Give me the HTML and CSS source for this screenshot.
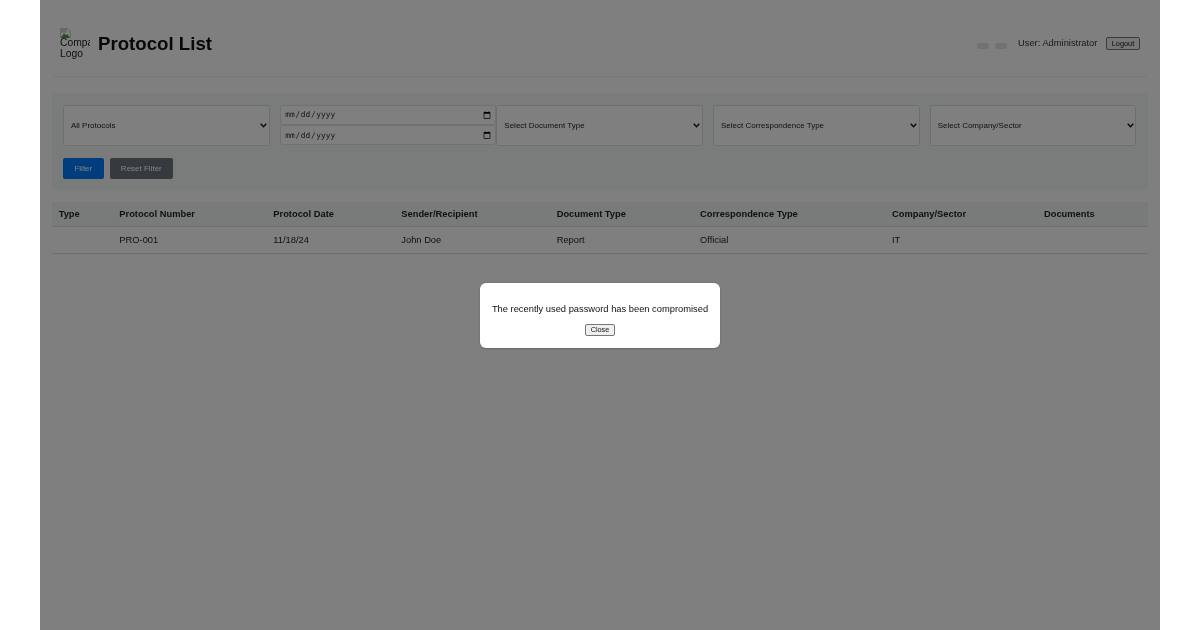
FILE: index.html
```html
<!DOCTYPE html>
<html lang="en">
<head>
<meta charset="utf-8">
<title>Protocol List</title>
<link rel="stylesheet" href="styles.css">
</head>
<body>
<div class="page">
  <header class="top soft">
    <div class="brand">
      <div class="logo">
        <svg class="broken" width="16" height="16" viewBox="0 0 16 16"><path d="M.5.5h10l5 5v10H.5z" fill="#fff" stroke="#a0a0a0"/><path d="M1 1h9v6H1z" fill="#c3d4f2"/><path d="M1 15l5-7 3 3 2-2 4 6z" fill="#4f9a3c"/></svg>
        <span class="alt">Company Logo</span>
      </div>
      <h1>Protocol List</h1>
    </div>
    <div class="user">
      <span class="pills"><i class="pill"></i><i class="pill"></i></span>
      <span class="name">User: Administrator</span>
      <button class="logout">Logout</button>
    </div>
  </header>
  <section class="filters soft">
    <div class="fields">
      <select class="sel"><option>All Protocols</option></select>
      <div class="dates">
        <input class="date" type="date">
        <input class="date" type="date">
      </div>
      <select class="sel"><option>Select Document Type</option></select>
      <select class="sel"><option>Select Correspondence Type</option></select>
      <select class="sel"><option>Select Company/Sector</option></select>
    </div>
    <div class="actions">
      <button class="btn primary">Filter</button>
      <button class="btn secondary">Reset Filter</button>
    </div>
  </section>
  <table class="list soft">
    <colgroup>
      <col class="c1"><col class="c2"><col class="c3"><col class="c4"><col class="c5"><col class="c6"><col class="c7"><col class="c8">
    </colgroup>
    <thead>
      <tr><th>Type</th><th>Protocol Number</th><th>Protocol Date</th><th>Sender/Recipient</th><th>Document Type</th><th>Correspondence Type</th><th>Company/Sector</th><th>Documents</th></tr>
    </thead>
    <tbody>
      <tr><td></td><td>PRO-001</td><td>11/18/24</td><td>John Doe</td><td>Report</td><td>Official</td><td>IT</td><td></td></tr>
    </tbody>
  </table>
  <div class="overlay">
    <div class="modal soft">
      <p class="msg">The recently used password has been compromised</p>
      <button class="close">Close</button>
    </div>
  </div>
</div>
</body>
</html>
```
FILE: styles.css
```css
* { box-sizing: border-box; }
html, body { margin: 0; height: 100%; background: #fff; }
body { font-family: "Liberation Sans", Arial, sans-serif; color: #212529; overflow: hidden; }
.page { zoom: 0.66667; position: relative; width: 1680px; height: 945px; margin: 0 auto; padding: 18px; background: #fff; overflow: hidden; }
.soft { filter: blur(.35px); }
.top { display: flex; justify-content: space-between; align-items: center; height: 96px; padding: 0 12px 2px; background: #fff; border-radius: 6px; box-shadow: 0 1px 3px rgba(0,0,0,.07); }
.brand { display: flex; align-items: center; gap: 12px; }
.logo { width: 45px; height: 47px; overflow: hidden; font-size: 15.5px; line-height: 16px; color: #222; }
.broken { display: block; }
.alt { display: block; width: 45px; }
h1 { margin: 0; padding-top: 1px; font-size: 28px; line-height: 36px; font-weight: 700; color: #111; }
.user { display: flex; align-items: center; font-size: 14px; }
.pills { display: flex; gap: 9px; margin-right: 16px; position: relative; top: 4px; }
.pill { display: block; width: 18px; height: 9px; border-radius: 4px; background: #e4e4e4; }
.name { margin-right: 13px; color: #333; }
.logout { width: 51px; height: 19px; padding: 0; font: 11px "Liberation Sans", Arial, sans-serif; color: #111; background: #efefef; border: 1px solid #767676; border-radius: 3px; }
.filters { margin-top: 25px; height: 146px; padding: 18px 17.5px 18px 16.5px; background: #f5f8f8; border-radius: 6px; }
.fields { display: grid; grid-template-columns: repeat(5, minmax(0, 1fr)); gap: 15px; height: 62px; }
.sel { appearance: none; width: 100%; height: 62px; padding: 0 12px 0 10.5px; font: 12px "Liberation Sans", Arial, sans-serif; color: #222; border: 1px solid #ddd; border-radius: 4px; background: #fff url("data:image/svg+xml,%3Csvg xmlns='http://www.w3.org/2000/svg' width='10' height='7' viewBox='0 0 10 7'%3E%3Cpath d='M1 1.2l4 4 4-4' fill='none' stroke='%23111' stroke-width='2'/%3E%3C/svg%3E") no-repeat right 3px center; }
.dates { display: flex; flex-direction: column; gap: 1px; width: 324px; }
.date { width: 100%; height: 30px; padding: 0 3px 0 6px; font: 11.8px monospace; color: #333; background: #fff; border: 1px solid #e2e2e2; border-radius: 4px; }
.actions { display: flex; gap: 9px; margin-top: 18px; }
.btn { height: 32px; padding: 0; font: 12px "Liberation Sans", Arial, sans-serif; color: #fff; border: 0; border-radius: 3px; }
.primary { width: 61px; background: #007bff; }
.secondary { width: 95px; background: #6c757d; }
.list { width: 1644px; margin-top: 18px; border-collapse: collapse; table-layout: fixed; font-size: 14px; color: #222; }
.c1 { width: 91px; } .c2 { width: 231px; } .c3 { width: 192px; } .c4 { width: 233px; }
.c5 { width: 215px; } .c6 { width: 288px; } .c7 { width: 228px; } .c8 { width: 166px; }
th { height: 37.5px; padding: 0 10px; text-align: left; font-weight: 700; background: #f2f5f5; border-bottom: 1px solid #ddd; }
td { height: 40px; padding: 0 10px; border-bottom: 1px solid #ddd; }
.overlay { position: absolute; inset: 0; display: flex; align-items: flex-start; justify-content: center; padding-top: 424.5px; background: rgba(0,0,0,.5); }
.modal { width: 360px; height: 97.5px; padding: 31.5px 0 0; text-align: center; background: #fff; border-radius: 9px; box-shadow: 0 1px 3px rgba(0,0,0,.2); }
.msg { margin: 0 0 11.5px; font-size: 14px; line-height: 16px; color: #111; white-space: nowrap; }
.close { width: 45px; height: 18px; padding: 0; font: 11px "Liberation Sans", Arial, sans-serif; color: #111; background: #efefef; border: 1px solid #767676; border-radius: 3px; }
```
